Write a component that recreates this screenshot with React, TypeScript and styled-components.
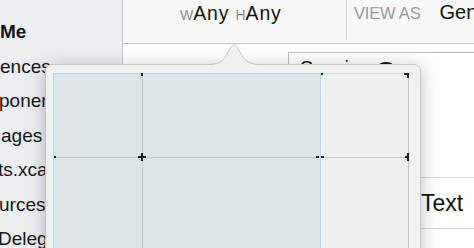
import React from "react";
import styled, { createGlobalStyle } from "styled-components";

const Global = createGlobalStyle`
  html, body { margin: 0; padding: 0; background: #ffffff; }
  body {
    width: 474px;
    height: 248px;
    overflow: hidden;
    font-family: "Liberation Sans", Arial, Helvetica, sans-serif;
    -webkit-font-smoothing: antialiased;
  }
  #root { width: 474px; height: 248px; }
`;

const Window = styled.div`
  position: relative;
  width: 474px;
  height: 248px;
  overflow: hidden;
  display: grid;
  grid-template-columns: 123px 1fr;
`;

const Sidebar = styled.nav`
  background: #eceef1;
  border-right: 1px solid #c9c9c9;
  padding-top: 15px;
  overflow: hidden;
  display: flex;
  flex-direction: column;
`;

const NavItem = styled.div<{ $shift: number; $bold?: boolean }>`
  font-size: 19px;
  line-height: 34.5px;
  color: #161616;
  font-weight: ${(p) => (p.$bold ? 700 : 400)};
  margin-left: ${(p) => p.$shift}px;
  white-space: nowrap;
`;

const Main = styled.main`
  display: flex;
  flex-direction: column;
  min-width: 0;
`;

const Toolbar = styled.header`
  height: 43px;
  flex: none;
  background: #f8f8f8;
  border-bottom: 1px solid #c4c4c4;
  box-shadow: 0 1px 0 #e6e6e6;
  display: flex;
  align-items: flex-start;
  white-space: nowrap;
  overflow: hidden;
`;

const SizeClass = styled.div`
  width: 224px;
  height: 40px;
  flex: none;
  box-sizing: border-box;
  padding: 2px 0 0 57px;
  border-right: 1px solid #d2d2d2;
  font-size: 19.5px;
  line-height: 22px;
  letter-spacing: 0.8px;
  color: #111111;
`;

const Axis = styled.span`
  font-size: 14px;
  letter-spacing: 0;
  color: #8c8c8c;
`;

const ViewAs = styled.div`
  margin-left: 7px;
  padding-top: 3px;
  font-size: 16.5px;
  line-height: 20px;
  color: #9a9a9a;
  letter-spacing: -0.2px;
`;

const Device = styled.div`
  margin-left: 19px;
  padding-top: 1px;
  font-size: 20px;
  line-height: 22px;
  color: #111111;
`;

const Canvas = styled.section`
  flex: 1;
  background: #ffffff;
  padding: 8px 0 0 165px;
  display: flex;
  min-height: 0;
`;

const Scene = styled.div`
  flex: 1;
  background: #ffffff;
  border-left: 1px solid #bdbdbd;
  border-top: 1px solid #bdbdbd;
  display: flex;
  flex-direction: column;
`;

const SceneHeader = styled.div`
  height: 124px;
  flex: none;
  box-sizing: border-box;
  padding: 4px 0 0 11px;
  display: flex;
  align-items: flex-start;
  gap: 4px;
  font-size: 20px;
  line-height: 23px;
  color: #111;
`;

const Knob = styled.span`
  width: 22px;
  height: 22px;
  margin-top: 5px;
  box-sizing: border-box;
  border: 2px solid #111;
  border-radius: 50%;
`;

const TableRow = styled.div`
  height: 50px;
  border-top: 1px solid #dadada;
  border-bottom: 1px solid #dadada;
  padding-left: 132px;
  font-size: 23px;
  line-height: 50px;
  color: #111;
`;

const Popover = styled.div`
  position: absolute;
  left: 45px;
  top: 64px;
  width: 376px;
  height: 220px;
  box-sizing: border-box;
  background: #f0f0f0;
  border: 1px solid #c6c6c6;
  border-radius: 7px;
  box-shadow: 0 3px 18px rgba(0, 0, 0, 0.26);
  padding: 8px 0 0 7px;
`;

const Arrow = styled.svg`
  position: absolute;
  left: 164px;
  top: -22px;
  width: 48px;
  height: 24px;
  overflow: visible;
`;

const SizeGrid = styled.div`
  position: relative;
  display: grid;
  grid-template-columns: 90px 178px 88px;
  grid-template-rows: 85px 150px;
`;

type Edge = string | undefined;

const Cell = styled.div<{ $bg: string; $l?: Edge; $r?: Edge; $t?: Edge; $b?: Edge }>`
  box-sizing: border-box;
  background: ${(p) => p.$bg};
  border-left: ${(p) => (p.$l ? `1px solid ${p.$l}` : "none")};
  border-right: ${(p) => (p.$r ? `1px solid ${p.$r}` : "none")};
  border-top: ${(p) => (p.$t ? `1px solid ${p.$t}` : "none")};
  border-bottom: ${(p) => (p.$b ? `1px solid ${p.$b}` : "none")};
`;

const Mark = styled.span<{ $x: number; $y: number; $w: number; $h: number }>`
  position: absolute;
  left: ${(p) => p.$x}px;
  top: ${(p) => p.$y}px;
  width: ${(p) => p.$w}px;
  height: ${(p) => p.$h}px;
  background: #1c1c1c;
`;

const BLUE = "#dde5e9";
const GRAY = "#efefef";
const BLUE_LINE = "#b2d9e7";
const GRID_LINE = "#c2c7ca";
const EDGE_LINE = "#c3c3c3";

const cells = [
  { bg: BLUE, l: BLUE_LINE, t: BLUE_LINE, r: GRID_LINE, b: GRID_LINE },
  { bg: BLUE, t: BLUE_LINE, r: BLUE_LINE, b: GRID_LINE },
  { bg: GRAY, t: "#dadada", r: EDGE_LINE, b: GRID_LINE },
  { bg: BLUE, l: BLUE_LINE, r: GRID_LINE },
  { bg: BLUE, r: BLUE_LINE },
  { bg: GRAY, r: EDGE_LINE },
];

const marks = [
  { x: 88, y: 0, w: 2, h: 3 },
  { x: 1, y: 83, w: 2, h: 2 },
  { x: 85, y: 83, w: 8, h: 2 },
  { x: 88, y: 80, w: 2, h: 8 },
  { x: 263, y: 83, w: 3, h: 2 },
  { x: 268, y: 83, w: 3, h: 2 },
  { x: 352, y: 83, w: 3, h: 2 },
  { x: 354, y: 80, w: 2, h: 8 },
  { x: 351, y: 0, w: 5, h: 2 },
  { x: 354, y: 0, w: 2, h: 5 },
  { x: 268, y: 0, w: 2, h: 2 },
];

const navItems = [
  { text: "Me", shift: 0, bold: true },
  { text: "ences", shift: 0 },
  { text: "ponents", shift: -1 },
  { text: "ages", shift: 1 },
  { text: "ts.xcassets", shift: -2 },
  { text: "urces", shift: -1 },
  { text: "Delegate", shift: -2 },
];

export default function App() {
  return (
    <>
      <Global />
      <Window>
        <Sidebar>
          {navItems.map((n) => (
            <NavItem key={n.text} $shift={n.shift} $bold={n.bold}>
              {n.text}
            </NavItem>
          ))}
        </Sidebar>
        <Main>
          <Toolbar>
            <SizeClass>
              <Axis>W</Axis>Any <Axis>H</Axis>Any
            </SizeClass>
            <ViewAs>VIEW AS</ViewAs>
            <Device>Generic iOS Device</Device>
          </Toolbar>
          <Canvas>
            <Scene>
              <SceneHeader>
                <span>Session</span>
                <Knob />
              </SceneHeader>
              <TableRow>Text</TableRow>
            </Scene>
          </Canvas>
        </Main>
        <Popover>
          <Arrow viewBox="0 0 48 24">
            <path
              d="M-2 23 L-2 21.5 C8 21.5 12 19 16.5 12 L21 4 Q24 -0.5 27 4 L31.5 12 C36 19 40 21.5 50 21.5 L50 23 Z"
              fill="#f0f0f0"
            />
            <path
              d="M-2 21.5 C8 21.5 12 19 16.5 12 L21 4 Q24 -0.5 27 4 L31.5 12 C36 19 40 21.5 50 21.5"
              fill="none"
              stroke="#c6c6c6"
              strokeWidth="1"
            />
          </Arrow>
          <SizeGrid>
            {cells.map((c, i) => (
              <Cell key={i} $bg={c.bg} $l={c.l} $r={c.r} $t={c.t} $b={c.b} />
            ))}
            {marks.map((m, i) => (
              <Mark key={i} $x={m.x} $y={m.y} $w={m.w} $h={m.h} />
            ))}
          </SizeGrid>
        </Popover>
      </Window>
    </>
  );
}
